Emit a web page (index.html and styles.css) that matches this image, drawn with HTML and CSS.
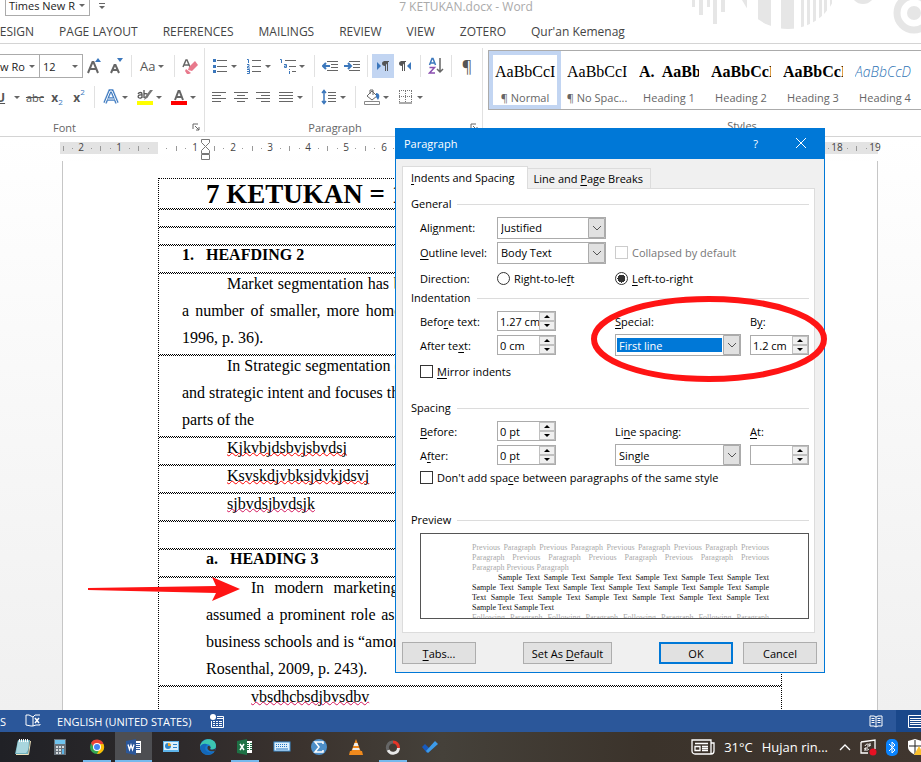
FILE: index.html
```html
<!DOCTYPE html>
<html lang="en">
<head>
    <meta charset="UTF-8">
    <meta name="viewport" content="width=device-width, initial-scale=1.0">
    <title>7 KETUKAN.docx - Word</title>
    <link rel="stylesheet" href="styles.css">
</head>
<body>

    <svg class="decor" width="231" height="34" viewBox="0 0 231 34" aria-hidden="true">
        <defs><clipPath id="globe"><circle cx="98" cy="-22" r="51"/></clipPath></defs>
        <g fill="#e6e6e6">
            <path d="M2 0h3v7h-3zM9 0h4v15h-4zM17 0h3v7h-3zM23 0h4v24h-4zM31 0h4v12h-4z"/>
            <path clip-path="url(#globe)" d="M50 0h7v30h-7zM68 0h13v30h-13zM91 0h13v30h-13zM111 0h3v30h-3zM117 0h3v30h-3zM123 0h3v30h-3zM129 0h3v30h-3zM134 0h3v30h-3zM140 0h2v30h-2zM145 0h2v30h-2z"/>
            <circle cx="173" cy="-8" r="12"/>
            <circle cx="224" cy="13" r="7"/>
        </g>
        <circle cx="224" cy="13" r="17" fill="none" stroke="#e6e6e6" stroke-width="7"/>
    </svg>

    <header class="titlebar">
        <button class="quick-font">Times New R<span class="caret"></span></button>
        <button class="quick-more" aria-label="Customize toolbar"><span class="caret"></span></button>
        <div class="doc-title">7 KETUKAN.docx - Word</div>
    </header>

    <nav class="tabs">
        <a href="#">DESIGN</a>
        <a href="#">PAGE LAYOUT</a>
        <a href="#">REFERENCES</a>
        <a href="#">MAILINGS</a>
        <a href="#">REVIEW</a>
        <a href="#">VIEW</a>
        <a href="#">ZOTERO</a>
        <a href="#">Qur'an Kemenag</a>
    </nav>

    <div class="ribbon">
        <section class="group font-group">
            <div class="tool-row">
                <button class="combo">w Ro<span class="caret"></span></button>
                <button class="combo size">12<span class="caret"></span></button>
                <button class="tool" aria-label="Grow font"><svg width="16" height="18" viewBox="0 0 16 18"><path d="M2 16 6.500 5h1L12 16M3.500 12h7" fill="none" stroke="#666" stroke-width="2"/><path d="M9 5l3-4 3 4z" fill="#3b77bc"/></svg></button>
                <button class="tool" aria-label="Shrink font"><svg width="16" height="18" viewBox="0 0 16 18"><path d="M3 16 6.500 8h1L11 16M4.500 13h5" fill="none" stroke="#666" stroke-width="2"/><path d="M9 1h6l-3 4z" fill="#3b77bc"/></svg></button>
                <span class="sep"></span>
                <button class="tool menu"><span class="case">Aa</span><span class="caret"></span></button>
                <span class="sep"></span>
                <button class="tool" aria-label="Clear formatting"><svg width="18" height="18" viewBox="0 0 18 18"><path d="M2 10 5 3h1l3 7M3 8h5" fill="none" stroke="#666" stroke-width="1.500"/><path d="M8 10l6-6 3 4-6 6-4-1z" fill="#e8798c"/><path d="M5 12l5 4-2 1H6l-2-3z" fill="#e8798c"/></svg></button>
            </div>
            <div class="tool-row">
                <button class="tool menu cut"><u>U</u><span class="caret"></span></button>
                <button class="tool"><s>abc</s></button>
                <button class="tool"><b>x</b><sub>2</sub></button>
                <button class="tool"><b>x</b><sup>2</sup></button>
                <span class="sep"></span>
                <button class="tool menu" aria-label="Text effects"><svg width="16" height="16" viewBox="0 0 16 16"><path d="M2 14 7 2h2l5 12M4.500 10h7" fill="none" stroke="#a9c6ea" stroke-width="4"/><path d="M2 14 7 2h2l5 12M4.500 10h7" fill="none" stroke="#3b77bc" stroke-width="3"/><path d="M2 14 7 2h2l5 12M4.500 10h7" fill="none" stroke="#fff"/></svg><span class="caret"></span></button>
                <button class="tool menu" aria-label="Highlight"><svg width="16" height="18" viewBox="0 0 16 18"><path d="M1 6c1-2 4-2 4 0v4M5 7c-5-1-5 4-1 3l1-1M7 2v8M7 6c5-2 5 5 0 3" fill="none" stroke="#555" stroke-width="1.300"/><path d="M16 2l-6 8-3 2 1-3 5-7z" fill="#777"/><path d="M0 13h16v4H0z" fill="#ff0"/></svg><span class="caret"></span></button>
                <button class="tool menu" aria-label="Font color"><svg width="16" height="18" viewBox="0 0 16 18"><path d="M4 12 7.500 3h1L12 12M5 9h6" fill="none" stroke="#666" stroke-width="2"/><path d="M0 13h16v4H0z" fill="red"/></svg><span class="caret"></span></button>
            </div>
            <div class="group-name">Font<svg class="launcher" width="8" height="8" viewBox="0 0 8 8"><path d="M1 6V1h5M3 3l4 4M7 4v3H4" fill="none" stroke="#666"/></svg></div>
        </section>

        <section class="group para-group">
            <div class="tool-row">
                <button class="tool menu" aria-label="Bullets"><svg width="16" height="16" viewBox="0 0 16 16"><path d="M5 2.500h10M5 8.500h10M5 13.500h10" stroke="#666"/><path d="M1 1h3v3H1zM1 7h3v3H1zM1 12h3v3H1z" fill="#3b77bc"/></svg><span class="caret"></span></button>
                <button class="tool menu" aria-label="Numbering"><svg width="16" height="16" viewBox="0 0 16 16"><path d="M6 2.500h9M6 8.500h9M6 13.500h9" stroke="#666"/><path d="M1 1.500h1.500V5M1 6.500h2v2H1.500v1.500H4M1 11.500h2.500v4H1M1 13.500h2" fill="none" stroke="#3b77bc"/></svg><span class="caret"></span></button>
                <button class="tool menu" aria-label="Multilevel list"><svg width="16" height="16" viewBox="0 0 16 16"><path d="M5 2.500h11M9 8.500h7M12 13.500h4" stroke="#666"/><path d="M0 1.500h1.500V5M4 6.500h2.500v3H4.500v-1.500h2M9.500 11v1M9.500 13v3" fill="none" stroke="#3b77bc"/></svg><span class="caret"></span></button>
                <span class="sep"></span>
                <button class="tool" aria-label="Decrease indent"><svg width="16" height="14" viewBox="0 0 16 14"><path d="M5 2.500h11M9 5.500h7M9 8.500h7M5 11.500h11" stroke="#666"/><path d="M8 7H1M4 4 1 7l3 3" fill="none" stroke="#3b77bc" stroke-width="2"/></svg></button>
                <button class="tool" aria-label="Increase indent"><svg width="16" height="14" viewBox="0 0 16 14"><path d="M5 2.500h11M9 5.500h7M9 8.500h7M5 11.500h11" stroke="#666"/><path d="M0 7h7M4 4l3 3-3 3" fill="none" stroke="#3b77bc" stroke-width="2"/></svg></button>
                <span class="sep"></span>
                <button class="tool active" aria-label="Left-to-right"><svg width="14" height="12" viewBox="0 0 14 12"><path d="M1 2v8l4-4z" fill="#3b77bc"/><path d="M9 6c-4 0-4-5 0-5h4" fill="#555"/><path d="M9.500 1v10M11.500 1v10M8 1.500h5" stroke="#555"/></svg></button>
                <button class="tool" aria-label="Right-to-left"><svg width="14" height="12" viewBox="0 0 14 12"><path d="M13 2v8L9 6z" fill="#3b77bc"/><path d="M4 6C0 6 0 1 4 1h4" fill="#555"/><path d="M4.500 1v10M6.500 1v10M3 1.500h5" stroke="#555"/></svg></button>
                <span class="sep"></span>
                <button class="tool" aria-label="Sort"><svg width="16" height="18" viewBox="0 0 16 18"><path d="M1.500 8 4 1.500h1L7.500 8M2.500 6h4" fill="none" stroke="#3b77bc" stroke-width="1.500"/><path d="M1.500 10.500h5l-5 5.500h5.500" fill="none" stroke="#8a4fb0" stroke-width="1.500"/><path d="M12 1v14M9 12l3 3 3-3" fill="none" stroke="#666" stroke-width="1.500"/></svg></button>
                <span class="sep"></span>
                <button class="tool pilcrow">¶</button>
            </div>
            <div class="tool-row">
                <button class="tool" aria-label="Align left"><svg width="14" height="12" viewBox="0 0 14 12"><path d="M0 1.500h14M0 4.500h9M0 7.500h14M0 10.500h9" stroke="#666"/></svg></button>
                <button class="tool" aria-label="Center"><svg width="14" height="12" viewBox="0 0 14 12"><path d="M0 1.500h14M3 4.500h8M0 7.500h14M3 10.500h8" stroke="#666"/></svg></button>
                <button class="tool" aria-label="Align right"><svg width="14" height="12" viewBox="0 0 14 12"><path d="M0 1.500h14M5 4.500h9M0 7.500h14M5 10.500h9" stroke="#666"/></svg></button>
                <button class="tool menu" aria-label="Justify"><svg width="16" height="12" viewBox="0 0 16 12"><path d="M1 1.500h14M1 4.500h14M1 7.500h14M1 10.500h14" stroke="#666"/></svg><span class="caret"></span></button>
                <span class="sep"></span>
                <button class="tool menu" aria-label="Line spacing"><svg width="16" height="16" viewBox="0 0 16 16"><path d="M7 3.500h8M7 6.500h8M7 9.500h8M7 12.500h8" stroke="#666"/><path d="M3 1v14M1 4l2-2.500L5 4M1 12l2 2.500L5 12" fill="none" stroke="#3b77bc" stroke-width="1.500"/></svg><span class="caret"></span></button>
                <span class="sep"></span>
                <button class="tool menu" aria-label="Shading"><svg width="16" height="16" viewBox="0 0 16 16"><path d="M3 7l5-5 5 5-5 4zM6 5V1h3v5" fill="none" stroke="#666"/><path d="M12 4c4 0 4 4 2 7l-2-3z" fill="#3b77bc"/><path d="M.5 12.500h15v3H.5z" fill="none" stroke="#888"/></svg><span class="caret"></span></button>
                <button class="tool menu" aria-label="Borders"><svg width="16" height="14" viewBox="0 0 16 14"><path d="M1 .5h13M1 6.500h13M1.500 1v12M7.500 1v12M13.500 1v12" stroke="#777" stroke-dasharray="1 1"/><path d="M1 13h13" stroke="#555"/></svg><span class="caret"></span></button>
            </div>
            <div class="group-name">Paragraph<svg class="launcher" width="8" height="8" viewBox="0 0 8 8"><path d="M1 6V1h5M3 3l4 4M7 4v3H4" fill="none" stroke="#666"/></svg></div>
        </section>

        <section class="group style-group">
            <div class="gallery">
                <button class="style-item selected"><span class="sample">AaBbCcI</span><span>¶ Normal</span></button>
                <button class="style-item"><span class="sample">AaBbCcI</span><span>¶ No Spac...</span></button>
                <button class="style-item"><span class="sample bold">A.&nbsp; AaBb</span><span>Heading 1</span></button>
                <button class="style-item"><span class="sample bold">AaBbCcI</span><span>Heading 2</span></button>
                <button class="style-item"><span class="sample bold">AaBbCcI</span><span>Heading 3</span></button>
                <button class="style-item"><span class="sample light">AaBbCcD</span><span>Heading 4</span></button>
            </div>
            <div class="group-name">Styles</div>
        </section>
    </div>

    <main class="workspace">
        <div class="ruler"><svg id="ruler" width="822" height="24" viewBox="0 0 822 24"></svg></div>

        <div class="page">
            <article class="sheet">
                <div class="row"><h1>7 KETUKAN = 1 MENIT</h1></div>
                <div class="row blank"></div>
                <div class="row blank"></div>
                <div class="row"><h2><span>1.</span>HEAFDING 2</h2></div>
                <div class="row">
                    <p>
                        <span class="line first">Market segmentation has been defined as the process of dividing a market up into</span>
                        <span class="line">a number of smaller, more homogeneous markets with similar needs (Dibb &amp; Simkin,</span>
                        <span class="line last">1996, p. 36).</span>
                    </p>
                </div>
                <div class="row">
                    <p>
                        <span class="line first">In Strategic segmentation (macro segmentation) is also related to the visions, missions</span>
                        <span class="line">and strategic intent and focuses the firms on the markets it should best serve and on which</span>
                        <span class="line last">parts of the</span>
                    </p>
                </div>
                <div class="row"><p><span class="line first last"><span class="typo">Kjkvbjdsbvjsbvdsj</span></span></p></div>
                <div class="row"><p><span class="line first last"><span class="typo">Ksvskdjvbksjdvkjdsvj</span></span></p></div>
                <div class="row"><p><span class="line first last"><span class="typo mixed">sjbvdsjbvdsjk</span></span></p></div>
                <div class="row"><p>&nbsp;</p></div>
                <div class="row nested"><h3><span>a.</span>HEADING 3</h3></div>
                <div class="row nested">
                    <p>
                        <span class="line first">In modern marketing theories, the concept of market segmentation has</span>
                        <span class="line">assumed a prominent role as it is one of the core subjects taught at most of the top</span>
                        <span class="line">business schools and is “among the most widely used of all the concepts” (Foedermayr,</span>
                        <span class="line last">Rosenthal, 2009, p. 243).</span>
                    </p>
                </div>
                <div class="row nested"><p><span class="line first last"><span class="typo mixed">vbsdhcbsdjbvsdbv</span></span></p></div>
            </article>
        </div>
    </main>

    <footer class="statusbar">
        <span>S</span>
        <svg width="16" height="14" viewBox="0 0 16 14"><path d="M8 3v9H6L1 11V1h3l4 2 2-2h5M8 12l3-1h4v-1" fill="none" stroke="#fff"/><path d="M10 4l4 5M14 4l-4 5" stroke="#fff" stroke-width="1.500"/></svg>
        <span>ENGLISH (UNITED STATES)</span>
        <svg width="14" height="14" viewBox="0 0 14 14"><circle cx="3" cy="3" r="3" fill="#fff"/><path d="M7 2.500h6.500v11h-12V7" fill="none" stroke="#fff"/><path d="M7 4.500h6M3 7.500h2m1 0h2m1 0h3M3 9.500h2m1 0h2m1 0h3M3 11.500h2m1 0h2m1 0h3" stroke="#fff"/></svg>
        <div class="views">
            <button aria-label="Read mode"><svg width="14" height="13" viewBox="0 0 14 13"><path d="M1 1h4l2 1 2-1h4v10H9l-2 1-2-1H1zM7 2v10M2.500 3.500h3M2.500 5.500h3M2.500 7.500h3M8.500 3.500h3M8.500 5.500h3M8.500 7.500h3" fill="none" stroke="#fff"/></svg></button>
            <button class="active" aria-label="Print layout"><svg width="14" height="13" viewBox="0 0 14 13"><path d="M.5.5h14v12H.5zM2 3.500h12M2 5.500h12M2 7.500h12M2 9.500h12" fill="none" stroke="#fff"/></svg></button>
        </div>
    </footer>

    <div class="taskbar">
        <button class="app" aria-label="Notepad"><svg width="18" height="18" viewBox="0 0 18 18"><path d="M4 2h12l-2 14H1z" fill="#6fb0bd"/><path d="M4 3h11l-1 9-2 3H2z" fill="#a9d6de"/><path d="M5.500 1v3m2-3v3m2-3v3m2-3v3m2-3v3" stroke="#fff"/><path d="M16.500 3l-2 13.500H2" fill="none" stroke="#eee2bd"/></svg></button>
        <button class="app" aria-label="Calculator"><svg width="14" height="18" viewBox="0 0 14 18"><path d="M1 1h12v16H1z" fill="#69737c"/><path d="M2 2h10v4H2z" fill="#6fc3ee"/><path d="M3 8h2v2H3zm3 0h2v2H6zm3 0h2v2H9zm-6 3h2v2H3zm3 0h2v2H6zm-3 3h2v2H3zm3 0h2v2H6z" fill="#d5dade"/><path d="M9 11h2v5H9z" fill="#5db5e8"/></svg></button>
        <button class="app open" aria-label="Chrome"><svg width="16" height="16" viewBox="0 0 16 16"><circle cx="8" cy="8" r="7" fill="#34a853"/><path d="M2 4a7 7 0 0 1 12.500 1H8L5 9z" fill="#ea4335"/><path d="M14.500 5A7 7 0 0 1 8 15l3-6-2-4z" fill="#fbbc05"/><circle cx="8" cy="8" r="4" fill="#fff"/><circle cx="8" cy="8" r="3" fill="#4285f4"/></svg></button>
        <button class="app open current" aria-label="Word"><svg width="16" height="16" viewBox="0 0 16 16"><path d="M9 2h6v12H9z" fill="#fff"/><path d="M10 4.500h4M10 6.500h4M10 8.500h4M10 10.500h4" stroke="#2b579a"/><path d="M0 2l10-2v16L0 14z" fill="#2b579a"/><path d="M2 5.500l1.500 5L5 6l1.500 4.500L8 5.500" fill="none" stroke="#fff" stroke-width="1.300"/></svg></button>
        <button class="app" aria-label="Control panel"><svg width="16" height="14" viewBox="0 0 16 14"><path d="M0 1h16v11H0z" fill="#5eb4ea"/><path d="M1 2h14v8H1z" fill="#dbf0fb"/><circle cx="5" cy="6" r="3" fill="#2d84c8"/><path d="M5 6V3a3 3 0 0 1 3 3z" fill="#f6a623"/><path d="M10 4h4v1h-4zm0 3h4v1h-4z" fill="#2d84c8"/></svg></button>
        <button class="app" aria-label="Edge"><svg width="18" height="18" viewBox="0 0 18 18"><circle cx="9" cy="9" r="8" fill="#1779d0"/><path d="M1 9C2-1 17-1 17 8c0 4-5 4-6 3 2-3-1-5-4-5S2 7 1 9z" fill="#3cc6b1"/><path d="M1 9c2-4 6-4 7-2-4 3-1 9 6 7-4 5-12 3-13-5z" fill="#1467b8"/><path d="M9 8c-2 4 2 6 7 5l1-3c-2 2-5 2-6 1 1-1 1-3-2-3z" fill="#3d3633"/></svg></button>
        <button class="app open" aria-label="Excel"><svg width="16" height="16" viewBox="0 0 16 16"><path d="M9 2h6v12H9z" fill="#fff"/><path d="M10 4.500h2m1 0h2M10 6.500h2m1 0h2M10 8.500h2m1 0h2M10 10.500h2m1 0h2" stroke="#1e7145"/><path d="M0 2l10-2v16L0 14z" fill="#1e7145"/><path d="M3 5l4 6M7 5l-4 6" stroke="#fff" stroke-width="1.500"/></svg></button>
        <button class="app" aria-label="Keyboard"><svg width="18" height="12" viewBox="0 0 18 12"><rect x="1" y="1" width="16" height="9" fill="#dff0fc" stroke="#3d8fd4"/><path d="M3 3.500h12M3 5.500h12" stroke="#2778c4" stroke-dasharray="1 1"/><path d="M3 8h12" stroke="#2778c4"/></svg></button>
        <button class="app" aria-label="SPSS"><svg width="18" height="18" viewBox="0 0 18 18"><circle cx="9" cy="9" r="8" fill="#4d8fc9"/><path d="M13 6V4H5l4 5-4 5h8v-2" fill="none" stroke="#fff" stroke-width="1.500"/></svg></button>
        <button class="app" aria-label="VLC"><svg width="16" height="18" viewBox="0 0 16 18"><path d="M8 1l5 13H3z" fill="#f08a1d"/><path d="M6.500 5h3l1 3h-5zM5 10h6l.8 2H4.200z" fill="#eee"/><path d="M2 13h12l1 4H1z" fill="#f08a1d"/></svg></button>
        <button class="app open" aria-label="Recorder"><svg width="16" height="16" viewBox="0 0 16 16"><g fill="none" stroke-width="3"><path d="M8 3a5.500 5.500 0 0 1 5.500 6" stroke="#e53528"/><path d="M13.500 9A5.500 5.500 0 0 1 3 11" stroke="#e8e8e8"/><path d="M3 11a5.500 5.500 0 0 1 5-8" stroke="#666"/></g></svg></button>
        <button class="app" aria-label="To Do"><svg width="18" height="14" viewBox="0 0 18 14"><path d="M1 7l3-3 5 5-3 4z" fill="#185abd"/><path d="M5 11L14 1l3 3-10 9z" fill="#3d9be9"/></svg></button>
        <div class="tray">
            <svg width="24" height="16" viewBox="0 0 24 16"><path d="M1 1h19v14H4a3 3 0 0 1-3-3zM20 4h3v8a3 3 0 0 1-3 3M4 4.500h13M4 7.500h5v4H4zM11 7.500h6M11 9.500h6M11 11.500h6" fill="none" stroke="#fff" stroke-width="1.300"/></svg>
            <span>31°C</span>
            <span class="weather">Hujan rin...</span>
            <svg width="12" height="8" viewBox="0 0 12 8"><path d="M1 7l5-5 5 5" fill="none" stroke="#fff" stroke-width="1.300"/></svg>
            <svg width="17" height="17" viewBox="0 0 17 17"><path d="M1 3l14-2v9M1 3v11h7" fill="none" stroke="#fff" stroke-width="1.300"/><path d="M5 7c1-3 5-2 5 0M10 4v3H7M9 10c-2 2-4 1-4-1M5 12V9h3" fill="none" stroke="#fff"/><circle cx="13" cy="13" r="3.500" fill="#e81123"/></svg>
            <svg width="12" height="17" viewBox="0 0 12 17"><rect width="12" height="17" rx="5" fill="#0a84ff"/><path d="M3 5l6 6-3 3V3l3 3-6 6" fill="none" stroke="#fff"/></svg>
            <svg width="16" height="18" viewBox="0 0 16 18"><path d="M8 1l7 2v6c0 4-4 6-7 8-3-2-7-4-7-8V3z" fill="#fff"/><path d="M8 2v14M2 8h12" stroke="#222"/><path d="M12 8l5 9H7z" fill="#fbc02d"/></svg>
        </div>
    </div>

    <!-- Paragraph dialog -->
    <form class="dialog">
        <div class="dialog-title">
            <span>Paragraph</span>
            <button type="button" aria-label="Help">?</button>
            <button type="button" aria-label="Close"><svg width="12" height="12" viewBox="0 0 12 12"><path d="M1 1l10 10M11 1L1 11" stroke="#fff"/></svg></button>
        </div>

        <div class="dialog-tabs">
            <button type="button" class="current"><u>I</u>ndents and Spacing</button>
            <button type="button">Line and <u>P</u>age Breaks</button>
        </div>

        <div class="panel">
            <h4>General</h4>
            <div class="fields general">
                <label for="align">Ali<u>g</u>nment:</label>
                <select id="align"><option>Justified</option></select>
                <label class="from-start" for="outline"><u>O</u>utline level:</label>
                <select id="outline"><option>Body Text</option></select>
                <label class="wide disabled"><input type="checkbox" disabled>Collapsed by default</label>
                <span class="from-start">Direction:</span>
                <label><input type="radio" name="dir"><span>Right-to-le<u>f</u>t</span></label>
                <label class="wide"><input type="radio" name="dir" checked><span><u>L</u>eft-to-right</span></label>
            </div>

            <h4>Indentation</h4>
            <div class="fields">
                <label for="before-text">Befo<u>r</u>e text:</label>
                <span class="spin"><input id="before-text" value="1.27 cm"><button type="button" class="up" aria-label="Up"></button><button type="button" class="down" aria-label="Down"></button></span>
                <label for="special"><u>S</u>pecial:</label>
                <label for="by">B<u>y</u>:</label>
                <label for="after-text">After te<u>x</u>t:</label>
                <span class="spin"><input id="after-text" value="0 cm"><button type="button" class="up" aria-label="Up"></button><button type="button" class="down" aria-label="Down"></button></span>
                <select id="special" class="long focused"><option>First line</option></select>
                <span class="spin"><input id="by" value="1.2 cm"><button type="button" class="up" aria-label="Up"></button><button type="button" class="down" aria-label="Down"></button></span>
                <label class="full mirror"><input type="checkbox"><span><u>M</u>irror indents</span></label>
            </div>

            <h4 class="spaced">Spacing</h4>
            <div class="fields">
                <label for="before"><u>B</u>efore:</label>
                <span class="spin"><input id="before" value="0 pt"><button type="button" class="up" aria-label="Up"></button><button type="button" class="down" aria-label="Down"></button></span>
                <label for="line-spacing">Li<u>n</u>e spacing:</label>
                <label for="at"><u>A</u>t:</label>
                <label for="after">A<u>f</u>ter:</label>
                <span class="spin"><input id="after" value="0 pt"><button type="button" class="up" aria-label="Up"></button><button type="button" class="down" aria-label="Down"></button></span>
                <select id="line-spacing" class="long"><option>Single</option></select>
                <span class="spin"><input id="at" value=""><button type="button" class="up" aria-label="Up"></button><button type="button" class="down" aria-label="Down"></button></span>
                <label class="full"><input type="checkbox"><span>Don't add spa<u>c</u>e between paragraphs of the same style</span></label>
            </div>

            <h4 class="spaced more">Preview</h4>
            <div class="preview">
                <div>Previous Paragraph Previous Paragraph Previous Paragraph Previous Paragraph Previous</div>
                <div>Paragraph Previous Paragraph Previous Paragraph Previous Paragraph Previous</div>
                <div class="last">Paragraph Previous Paragraph</div>
                <div class="dark indent">Sample Text Sample Text Sample Text Sample Text Sample Text Sample Text</div>
                <div class="dark">Sample Text Sample Text Sample Text Sample Text Sample Text Sample Text Sample</div>
                <div class="dark">Text Sample Text Sample Text Sample Text Sample Text Sample Text Sample Text</div>
                <div class="dark last">Sample Text Sample Text</div>
                <div>Following Paragraph Following Paragraph Following Paragraph Following Paragraph</div>
            </div>
        </div>

        <div class="dialog-buttons">
            <button type="button"><u>T</u>abs...</button>
            <button type="button" class="default-btn">Set As <u>D</u>efault</button>
            <button type="button" class="ok">OK</button>
            <button type="button">Cancel</button>
        </div>
    </form>

    <svg class="mark-arrow" width="154" height="26" viewBox="0 0 154 26" aria-hidden="true"><path d="M1 12l128-2-4-9 28 12-28 12 4-8L1 14z" fill="#ff1414"/></svg>
    <svg class="mark-circle" width="238" height="88" viewBox="0 0 238 88" aria-hidden="true"><ellipse cx="119" cy="44" rx="115" ry="40" fill="none" stroke="#ff1414" stroke-width="6"/></svg>

    <script>
        // ruler: 1 cm = 37.8px, zero at the left margin
        const cm = 37.8;
        const zero = 97;
        let marks = '<rect y="5" width="98" height="12" fill="#e3e3e3"/>' +
            '<rect x="98" y="5" width="622" height="12" fill="#fff"/>' +
            '<rect x="720" y="5" width="98" height="12" fill="#e3e3e3"/>';

        for (let i = -10; i <= 76; i++) {
            if (i === 0) continue;
            const x = Math.round(zero + i * cm / 4);
            if (i % 4 === 0) {
                marks += `<text x="${x}" y="14">${Math.abs(i / 4)}</text>`;
            } else if (i % 2 === 0) {
                marks += `<path d="M${x + 0.5} 9v5"/>`;
            } else {
                marks += `<path d="M${x + 0.5} 11v1"/>`;
            }
        }
        marks += '<path class="marker" d="M141.500 2.500h8v3l-4 4-4-4zM145.500 9.500l4 4v3h-8v-3zM141.500 17.500h8v5h-8z"/>';
        document.getElementById('ruler').innerHTML = marks;
    </script>

</body>
</html>
```
FILE: styles.css
```css
* {
    box-sizing: border-box;
}
body {
    margin: 0;
    height: 100vh;
    display: flex;
    flex-direction: column;
    position: relative;
    overflow: hidden;
    font-family: "Open Sans", "Noto Sans", sans-serif;
    font-size: 12px;
    color: #444;
    background: #fff;
}
button, input, select {
    font: inherit;
    color: inherit;
    margin: 0;
    padding: 0;
    border: 0;
    border-radius: 0;
    background: none;
}
svg {
    display: block;
    flex: none;
}
h1, h2, h3, h4, p {
    margin: 0;
}
.caret {
    border: 3px solid transparent;
    border-top: 3px solid #666;
    border-bottom: 0;
    flex: none;
}
.decor {
    position: absolute;
    top: 0;
    right: 0;
}

/* title bar and tabs */
.titlebar {
    flex: none;
    height: 20px;
    display: flex;
    align-items: flex-start;
}
.quick-font {
    width: 85px;
    height: 22px;
    margin: -6px 0 0 5px;
    padding: 0 4px 0 3px;
    border: 1px solid #ababab;
    display: flex;
    align-items: center;
    justify-content: space-between;
    white-space: nowrap;
    font-size: 11px;
    color: #222;
}
.quick-more {
    margin: 3px 0 0 9px;
    padding-top: 2px;
    border-top: 1px solid #666;
}
.quick-more .caret {
    display: block;
}
.doc-title {
    flex: 1;
    padding-right: 94px;
    text-align: center;
    line-height: 14px;
    color: #aaa;
}
.tabs {
    flex: none;
    height: 24px;
    display: flex;
    align-items: center;
    gap: 25px;
    margin-left: -9px;
    border-bottom: 1px solid #d4d4d4;
    font-size: 12px;
}
.tabs a {
    color: #444;
    text-decoration: none;
    white-space: nowrap;
}

/* ribbon */
.ribbon {
    flex: none;
    height: 93px;
    display: flex;
    border-bottom: 1px solid #d4d4d4;
}
.group {
    display: flex;
    flex-direction: column;
    gap: 7px;
    margin: 4px 0;
    padding-top: 6px;
    border-right: 1px solid #e1e1e1;
}
.font-group {
    width: 205px;
}
.para-group {
    width: 278px;
    padding-left: 3px;
}
.style-group {
    flex: 1;
    min-width: 0;
    padding: 2px 0 0 5px;
    border: 0;
}
.tool-row {
    height: 24px;
    display: flex;
    align-items: center;
}
.combo {
    width: 40px;
    height: 24px;
    padding: 0 4px 0 0;
    border: 1px solid #ababab;
    border-left: 0;
    display: flex;
    align-items: center;
    justify-content: space-between;
    white-space: nowrap;
    font-size: 11px;
    color: #222;
}
.combo.size {
    width: 43px;
    padding-left: 3px;
}
.tool {
    width: 22px;
    height: 24px;
    flex: none;
    display: flex;
    align-items: center;
    justify-content: center;
    color: #555;
}
.tool.menu {
    width: 34px;
    padding-left: 4px;
    justify-content: flex-start;
    gap: 3px;
}
.tool.cut {
    width: 24px;
    padding: 0 4px 0 0;
    justify-content: space-between;
    font-weight: bold;
    text-indent: -4px;
}
.tool.active {
    background: #c2d5f2;
}
.tool s {
    font-size: 11px;
}
.tool sub, .tool sup {
    font-size: 8px;
    color: #3b77bc;
    line-height: 8px;
}
.tool sub {
    align-self: flex-end;
    padding-bottom: 3px;
}
.tool sup {
    align-self: flex-start;
    padding-top: 3px;
}
.case {
    font-size: 13px;
}
.pilcrow {
    font-size: 16px;
}
.sep {
    width: 1px;
    height: 22px;
    margin: 0 4px;
    background: #e1e1e1;
}
.group-name {
    display: flex;
    justify-content: center;
    align-items: center;
    flex: none;
    height: 16px;
    margin-top: 3px;
    font-size: 11px;
    color: #666;
    position: relative;
}
.font-group .group-name {
    padding-right: 75px;
}
.para-group .group-name {
    padding-right: 20px;
}
.style-group .group-name {
    margin-top: 0;
    padding-left: 75px;
}
.launcher {
    position: absolute;
    right: 4px;
    top: 4px;
}
.gallery {
    height: 60px;
    flex: none;
    display: flex;
    border: 1px solid #ababab;
    border-right: 0;
    overflow: hidden;
}
.style-item {
    width: 72px;
    flex: none;
    border: 4px solid transparent;
    display: flex;
    flex-direction: column;
    justify-content: space-between;
    align-items: center;
    padding: 6px 2px 0;
    white-space: nowrap;
    font-size: 11px;
    color: #666;
}
.style-item.selected {
    border-color: #c2d5f2;
}
.sample {
    width: 60px;
    overflow: hidden;
    font-family: "Liberation Serif", serif;
    font-size: 16px;
    line-height: 22px;
    text-align: left;
    color: #000;
}
.sample.bold {
    font-weight: bold;
}
.sample.light {
    font-family: "Open Sans", sans-serif;
    font-size: 14px;
    font-weight: 300;
    font-style: italic;
    color: #2e74b5;
}

/* document */
.workspace {
    flex: 1;
    min-height: 0;
    display: flex;
    flex-direction: column;
    background: linear-gradient(#fff, #f0f0f0);
    overflow: hidden;
}
.ruler {
    flex: none;
    height: 24px;
    padding-left: 60px;
    overflow: hidden;
}
.ruler text {
    font-size: 10px;
    text-anchor: middle;
    fill: #444;
}
.ruler path {
    stroke: #999;
    fill: none;
}
.ruler .marker {
    stroke: #777;
    fill: #fff;
}
.page {
    flex: 1;
    min-height: 0;
    margin: 0 43px 0 62px;
    padding: 17px 95px 0;
    border: 1px solid #c6c6c6;
    border-width: 0 1px;
    background: #fff;
    overflow: hidden;
}
.sheet {
    border: 1px dotted #000;
    border-bottom: 0;
    font-family: "Liberation Serif", serif;
    font-size: 16px;
    color: #000;
}
.row {
    padding: 0 23px 1px;
    background: repeating-conic-gradient(#000 0 25%, #fff 0 50%) left bottom / 2px 2px repeat-x;
}
.row.nested {
    padding-left: 47px;
}
.row.blank {
    height: 18px;
}
.sheet h1 {
    padding-left: 24px;
    font-size: 27px;
    line-height: 30px;
    white-space: nowrap;
}
.sheet h2, .sheet h3 {
    display: flex;
    font-size: 16px;
    line-height: 18px;
    padding-bottom: 9px;
}
.sheet h2 span, .sheet h3 span {
    width: 24px;
}
.row p {
    margin-top: -4px;
    padding-bottom: 4px;
    line-height: 27px;
}
.line {
    display: block;
    white-space: nowrap;
    text-align: justify;
    text-align-last: justify;
}
.line.first {
    padding-left: 45px;
}
.line.last {
    text-align-last: left;
}
.typo {
    text-decoration: underline wavy #f00 1px;
    text-underline-offset: -1px;
    text-decoration-skip-ink: none;
}
.typo.mixed {
    text-decoration-color: #d4145a;
}

/* status bar */
.statusbar {
    flex: none;
    height: 22px;
    display: flex;
    align-items: center;
    background: #2b579a;
    color: #fff;
    font-size: 11px;
}
.statusbar > svg {
    margin: 0 16px 0 19px;
}
.views {
    display: flex;
    align-self: stretch;
    margin-left: auto;
}
.views button {
    width: 40px;
    display: flex;
    align-items: center;
    justify-content: center;
}
.views .active {
    width: 25px;
    padding-left: 12px;
    justify-content: flex-start;
    background: #19478a;
    overflow: hidden;
}

/* taskbar */
.taskbar {
    flex: none;
    height: 30px;
    display: flex;
    padding-left: 4px;
    background: linear-gradient(90deg, #202126, #2e2a2b 20%, #3b332e 33%, #45413a 48%, #3b332b 70%, #40362f);
    color: #fff;
}
.app {
    width: 37px;
    flex: none;
    display: flex;
    align-items: center;
    justify-content: center;
}
.app.open {
    background: linear-gradient(#76b9ed, #76b9ed) center bottom / 28px 2px no-repeat;
}
.app.current {
    background: linear-gradient(#76b9ed, #76b9ed) center bottom / 37px 2px no-repeat #4d4e52;
}
.tray {
    flex: 1;
    display: flex;
    align-items: center;
    justify-content: flex-end;
    gap: 9px;
    margin-right: -2px;
    font-size: 13px;
    white-space: nowrap;
}
.weather {
    padding-right: 2px;
}

/* dialog */
.dialog {
    position: absolute;
    left: 395px;
    top: 128px;
    width: 430px;
    border: 1px solid #0078d7;
    background: #f0f0f0;
    color: #000;
    font-size: 11px;
    padding-bottom: 8px;
}
.dialog u {
    text-underline-offset: 2px;
}
.dialog-title {
    height: 30px;
    display: flex;
    align-items: center;
    padding: 0 1px 2px 8px;
    background: #0078d7;
    color: #fff;
    font-size: 11px;
}
.dialog-title span {
    flex: 1;
}
.dialog-title button {
    width: 45px;
    display: flex;
    justify-content: center;
}
.dialog-tabs {
    display: flex;
    align-items: flex-end;
    padding: 7px 6px 0;
}
.dialog-tabs button {
    height: 20px;
    padding: 0 7px 1px 6px;
    border: 1px solid #dcdcdc;
    border-width: 1px 1px 0 0;
}
.dialog-tabs .current {
    height: 23px;
    padding: 0 12px 2px 8px;
    margin-bottom: -1px;
    border-left-width: 1px;
    background: #fff;
    position: relative;
}
.panel {
    margin: 0 9px 0 6px;
    padding: 9px 5px 13px 8px;
    border: 1px solid #dcdcdc;
    background: #fff;
}
.panel h4 {
    display: flex;
    align-items: center;
    gap: 6px;
    font-size: 11px;
    line-height: 12px;
    font-weight: normal;
    margin-bottom: 5px;
}
.panel h4::after {
    content: "";
    flex: 1;
    height: 1px;
    background: #dcdcdc;
}
.panel h4.spaced {
    margin-top: 21px;
}
.panel h4.more {
    margin: 23px 0 7px;
}
.fields {
    display: grid;
    grid-template-columns: 77px 118px 135px 59px;
    grid-auto-rows: 24px;
    align-items: center;
    padding-left: 9px;
    white-space: nowrap;
}
.fields.general {
    grid-template-rows: 25px 25px 27px;
}
.fields label {
    display: block;
}
.fields .wide {
    grid-column: span 2;
}
.fields .full {
    grid-column: 1 / -1;
    align-self: start;
    height: 20px;
}
.fields .from-start {
    grid-column-start: 1;
}
.fields label:has(input) {
    display: flex;
    align-items: center;
    gap: 4px;
}
.fields .mirror {
    height: 28px;
}
.fields .disabled {
    color: #777;
}
input[type="checkbox"] {
    appearance: none;
    width: 13px;
    height: 13px;
    border: 1px solid #333;
    background: #fff;
}
input[type="checkbox"]:disabled {
    border-color: #ccc;
}
input[type="radio"] {
    appearance: none;
    width: 13px;
    height: 13px;
    border: 1px solid #333;
    border-radius: 50%;
}
input[type="radio"]:checked {
    background: radial-gradient(#333 0 4px, #fff 4px);
}
select {
    appearance: none;
    width: 109px;
    height: 22px;
    padding: 0 20px 0 3px;
    border: 1px solid #ababab;
    background:
        url("data:image/svg+xml,%3Csvg xmlns='http://www.w3.org/2000/svg' width='17' height='20'%3E%3Cpath d='M.5 .5h16v19H.5z' fill='%23e1e1e1' stroke='%23ababab'/%3E%3Cpath d='M5 8l4 4 4-4' fill='none' stroke='%23555'/%3E%3C/svg%3E") right center no-repeat,
        #fff;
}
select.long {
    width: 126px;
}
select.focused {
    color: #fff;
    outline: 0;
    background:
        url("data:image/svg+xml,%3Csvg xmlns='http://www.w3.org/2000/svg' width='17' height='20'%3E%3Cpath d='M.5 .5h16v19H.5z' fill='%23e1e1e1' stroke='%23ababab'/%3E%3Cpath d='M5 8l4 4 4-4' fill='none' stroke='%23555'/%3E%3C/svg%3E") right center no-repeat,
        linear-gradient(#0078d7, #0078d7) 1px 3px / 105px 14px no-repeat,
        #fff;
}
.spin {
    width: 59px;
    height: 20px;
    display: grid;
    grid-template-columns: 1fr 16px;
    grid-template-rows: 9px 9px;
    border: 1px solid #ababab;
    background: #fff;
}
.spin input {
    grid-row: span 2;
    width: 100%;
    min-width: 0;
    padding-left: 2px;
}
.spin button {
    display: flex;
    align-items: center;
    justify-content: center;
    border: 1px solid #c0c0c0;
    background: #f0f0f0;
}
.spin button::before {
    content: "";
    border: 3px solid transparent;
    border-top: 0;
    border-bottom: 3px solid #000;
}
.spin .down::before {
    border-top: 3px solid #000;
    border-bottom: 0;
}
.preview {
    height: 86px;
    margin-left: 9px;
    padding: 9px 39px 0 51px;
    border: 1px solid #555;
    overflow: hidden;
    font-family: "Liberation Serif", serif;
    font-size: 8px;
    line-height: 10px;
    color: #aaa;
}
.preview div {
    text-align: justify;
    text-align-last: justify;
    white-space: nowrap;
}
.preview .last {
    text-align-last: left;
}
.preview .dark {
    color: #111;
}
.preview .indent {
    padding-left: 26px;
}
.dialog-buttons {
    display: flex;
    gap: 10px;
    padding: 9px 7px 0 6px;
}
.dialog-buttons button {
    width: 74px;
    height: 22px;
    border: 1px solid #adadad;
    background: #e1e1e1;
}
.dialog-buttons .default-btn {
    width: 89px;
    margin: 0 auto;
}
.dialog-buttons .ok {
    border: 2px solid #0078d7;
}

/* red annotations over the screen */
.mark-arrow {
    position: absolute;
    left: 87px;
    top: 576px;
}
.mark-circle {
    position: absolute;
    left: 590px;
    top: 295px;
}
```
